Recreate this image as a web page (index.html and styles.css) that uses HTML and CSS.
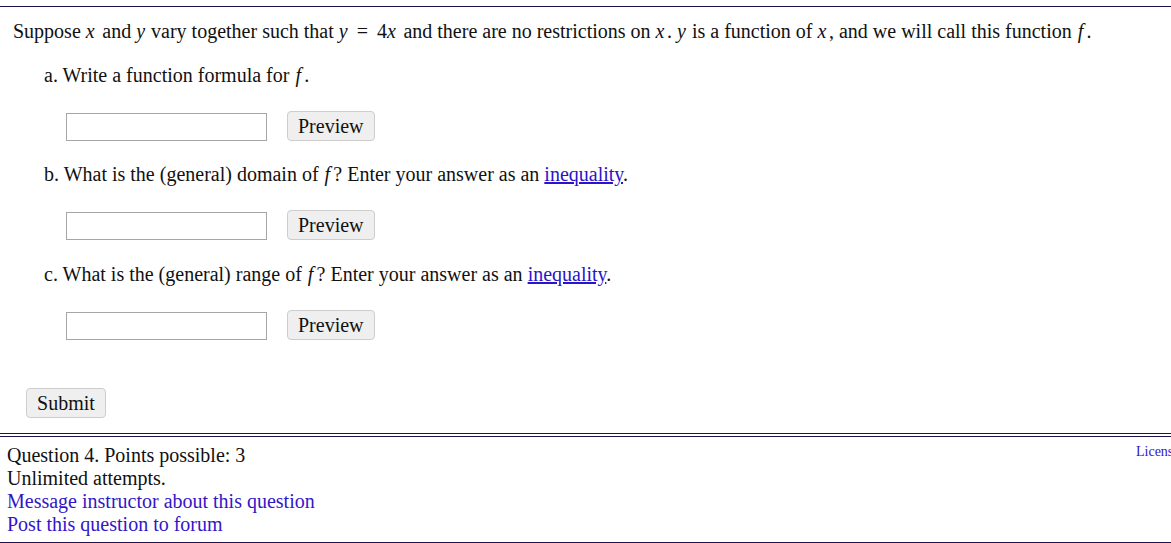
FILE: index.html
```html
<!DOCTYPE html>
<html>
<head>
<meta charset="utf-8">
<link rel="stylesheet" href="styles.css">
</head>
<body>
<div class="question">
  <p class="intro">Suppose <span class="m mx">x</span> and <span class="m my">y</span> vary together such that <span class="m my">y</span><span class="eq">=</span>4<span class="m mx">x</span> and there are no restrictions on <span class="m mx">x</span>. <span class="m my">y</span> is a function of <span class="m mx">x</span>, and we will call this function <span class="m mf">f</span>.</p>
  <div class="part">
    <p class="ptext">a. Write a function formula for <span class="m mf">f</span>.</p>
    <div class="row"><input class="ans" type="text"><button class="btn">Preview</button></div>
  </div>
  <div class="part">
    <p class="ptext">b. What is the (general) domain of <span class="m mf">f</span>? Enter your answer as an <a class="link" href="#">inequality</a>.</p>
    <div class="row"><input class="ans" type="text"><button class="btn">Preview</button></div>
  </div>
  <div class="part">
    <p class="ptext">c. What is the (general) range of <span class="m mf">f</span>? Enter your answer as an <a class="link" href="#">inequality</a>.</p>
    <div class="row"><input class="ans" type="text"><button class="btn">Preview</button></div>
  </div>
  <div class="submitrow"><button class="btn submit">Submit</button></div>
</div>
<div class="footer">
  <div class="finfo">
    <div>Question 4. Points possible: 3</div>
    <div>Unlimited attempts.</div>
    <div><a class="flink" href="#">Message instructor about this question</a></div>
    <div><a class="flink" href="#">Post this question to forum</a></div>
  </div>
  <div class="license"><a class="flink" href="#">License</a></div>
</div>
</body>
</html>
```
FILE: styles.css
```css
html, body {
  margin: 0;
  padding: 0;
  background: #ffffff;
  overflow: hidden;
}
body {
  font-family: "Liberation Serif", "Times New Roman", serif;
  font-size: 20px;
  color: #111111;
  width: 1171px;
}
.question {
  margin-top: 6px;
  border-top: 1px solid #1c1252;
  padding: 0 0 15px 0;
}
p { margin: 0; }
.intro {
  margin-top: 13px;
  padding-left: 13px;
  line-height: 23px;
}
.m {
  font-style: italic;
}
.mx { margin-right: 0.13em; }
.my { margin-right: 0.05em; }
.mf { margin: 0 0.06em 0 0.05em; padding-right: 0.1em; }
.eq {
  margin: 0 9px 0 8px;
}
.part {
  padding-left: 44px;
}
.ptext {
  line-height: 23px;
  margin-top: 21px;
}
.part + .part .ptext { margin-top: 22px; }
.part + .part + .part .ptext { margin-top: 23px; }
.row {
  display: flex;
  align-items: center;
  gap: 20px;
  margin-top: 24px;
  padding-left: 22px;
  height: 30px;
}
.ans {
  box-sizing: border-box;
  width: 201px;
  height: 28px;
  border: 1px solid #a6a6a6;
  margin: 2px 0 0 0;
  padding: 0;
  background: #fff;
}
.btn {
  box-sizing: border-box;
  height: 30px;
  padding: 0 10px;
  font-family: "Liberation Serif", "Times New Roman", serif;
  font-size: 20px;
  color: #111;
  background: #efefef;
  border: 1px solid #cdcdcd;
  border-radius: 4px;
  line-height: 26px;
}
.link {
  color: #2a14c8;
  text-decoration: underline;
}
.submitrow {
  margin-top: 48px;
  padding-left: 26px;
}
.submit {
  width: 80px;
  padding: 0;
}
.footer {
  display: flex;
  border-top: 4px double #1c1252;
  border-bottom: 1px solid #1c1252;
  padding: 7px 0 6px 0;
  overflow: hidden;
}
.finfo {
  padding-left: 7px;
  line-height: 23px;
  flex: 1;
}
.flink {
  color: #3216c8;
  text-decoration: none;
}
.license {
  flex: 0 0 35px;
  min-width: 0;
  white-space: nowrap;
  font-size: 14px;
  line-height: 16px;
}
```
